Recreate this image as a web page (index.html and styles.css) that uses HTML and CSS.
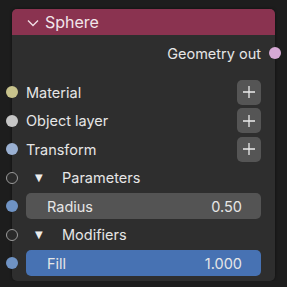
FILE: index.html
```html
<!DOCTYPE html>
<html lang="en">
<head>
    <meta charset="UTF-8">
    <meta name="viewport" content="width=device-width, initial-scale=1.0">
    <title>Sphere node</title>
    <link rel="stylesheet" href="styles.css">
</head>
<body>
    <div class="node">
        <div class="node-header">
            <svg class="chevron" width="12" height="8" viewBox="0 0 12 8">
                <path d="M1 1.5 L6 6.5 L11 1.5" fill="none" stroke="#f0dde4" stroke-width="1.4"/>
            </svg>
            <span>Sphere</span>
        </div>
        <div class="node-body">
            <div class="row output">
                <span>Geometry out</span>
                <i class="socket out geometry"></i>
            </div>
            <div class="inputs">
                <div class="row">
                    <i class="socket material"></i>
                    <span>Material</span>
                    <button class="add"><svg width="12" height="12" viewBox="0 0 12 12"><path d="M6 0 V12 M0 6 H12" stroke="#ececec" stroke-width="1.3"/></svg></button>
                </div>
                <div class="row">
                    <i class="socket object"></i>
                    <span>Object layer</span>
                    <button class="add"><svg width="12" height="12" viewBox="0 0 12 12"><path d="M6 0 V12 M0 6 H12" stroke="#ececec" stroke-width="1.3"/></svg></button>
                </div>
                <div class="row">
                    <i class="socket transform"></i>
                    <span>Transform</span>
                    <button class="add"><svg width="12" height="12" viewBox="0 0 12 12"><path d="M6 0 V12 M0 6 H12" stroke="#ececec" stroke-width="1.3"/></svg></button>
                </div>
                <div class="row panel">
                    <i class="socket hollow"></i>
                    <span class="tri">&#9660;</span>
                    <span>Parameters</span>
                </div>
                <div class="row">
                    <i class="socket value"></i>
                    <div class="field">
                        <span>Radius</span>
                        <span>0.50</span>
                    </div>
                </div>
                <div class="row panel">
                    <i class="socket hollow"></i>
                    <span class="tri">&#9660;</span>
                    <span>Modifiers</span>
                </div>
                <div class="row">
                    <i class="socket value"></i>
                    <div class="field active">
                        <span>Fill</span>
                        <span>1.000</span>
                    </div>
                </div>
            </div>
        </div>
    </div>
</body>
</html>
```

FILE: styles.css
```css
body {
    margin: 0;
    padding: 9px 12px 0 12px;
    background-color: #1d1d1d;
    font-family: Inter, "Noto Sans", sans-serif;
    font-size: 14.5px;
    color: #e6e6e6;
}
.node {
    width: 263px;
    height: 272px;
    background-color: #2e2e2e;
    border-radius: 5px;
    box-shadow: 0 0 3px rgba(0, 0, 0, 0.5);
}
.node-header {
    height: 26px;
    background-color: #8a3350;
    border-radius: 5px 5px 0 0;
    display: flex;
    align-items: center;
    padding-left: 15px;
    gap: 6px;
    font-size: 16px;
    color: #f2e6ea;
}
.chevron {
    margin-top: 1px;
}
.node-body {
    padding: 4px 14px 0 14px;
}
.row {
    position: relative;
    height: 28.5px;
    display: flex;
    align-items: center;
}
.output {
    height: 28px;
    justify-content: flex-end;
    margin-bottom: 11px;
}
.inputs .row {
    justify-content: space-between;
}
.inputs .row.panel {
    justify-content: flex-start;
}
.socket {
    position: absolute;
    left: -20px;
    top: 50%;
    width: 12px;
    height: 12px;
    margin-top: -6px;
    border-radius: 50%;
    box-sizing: border-box;
}
.socket.out {
    left: auto;
    right: -20px;
}
.geometry { background-color: #d7a9d6; }
.material { background-color: #c8c38c; }
.object { background-color: #c6c6c6; }
.transform { background-color: #9ab0d2; }
.value { background-color: #6f93c4; }
.hollow {
    border: 1.2px solid #9a9a9a;
    background-color: #2a2a2a;
}
.add {
    width: 24px;
    height: 25px;
    border: none;
    border-radius: 5px;
    background-color: #555555;
    padding: 0;
    display: flex;
    align-items: center;
    justify-content: center;
}
.tri {
    font-family: "DejaVu Sans", sans-serif;
    font-size: 10px;
    width: 10px;
    margin-left: 9px;
    margin-right: 17px;
    color: #ececec;
}
.field {
    width: 235px;
    height: 26px;
    box-sizing: border-box;
    padding: 0 19px 0 21px;
    background-color: #545454;
    border-radius: 5px;
    display: flex;
    align-items: center;
    justify-content: space-between;
}
.field.active {
    background-color: #4772b3;
}
```
